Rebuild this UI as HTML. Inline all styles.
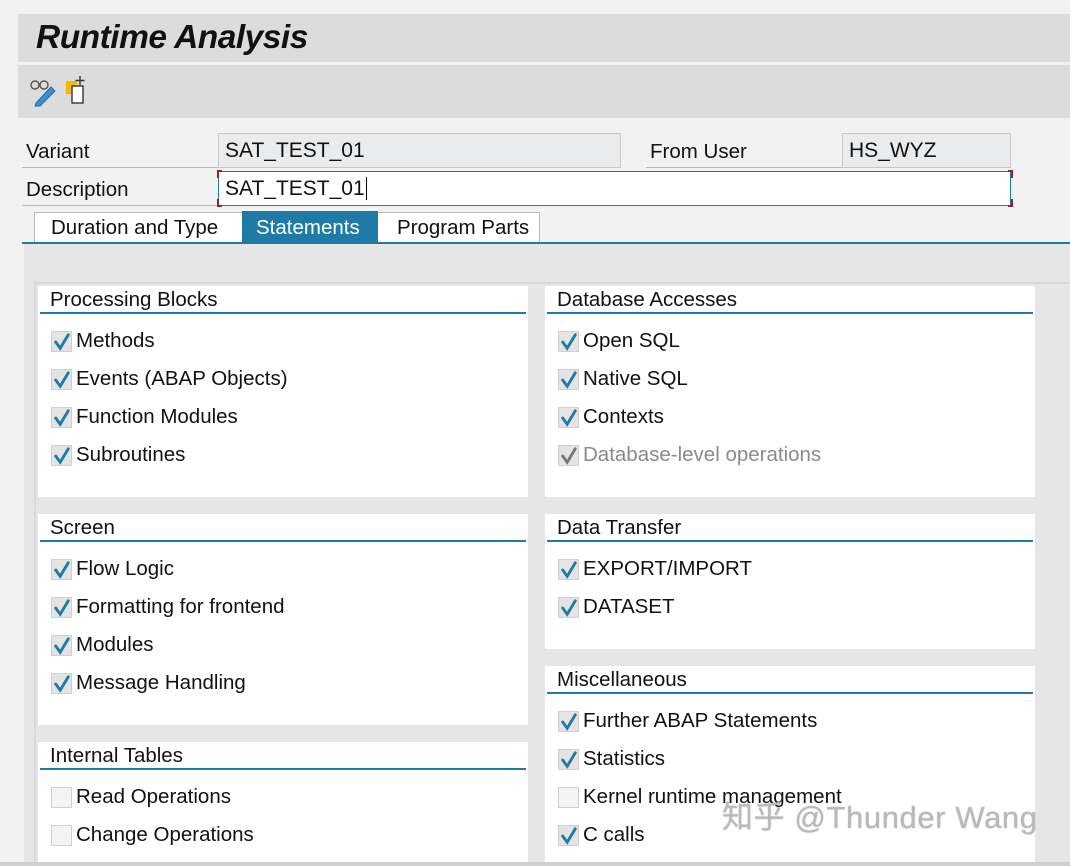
<!DOCTYPE html>
<html><head><meta charset="utf-8"><style>
*{margin:0;padding:0;box-sizing:border-box}
body{width:1070px;height:866px;background:#f2f2f2;font-family:"Liberation Sans","Noto Sans CJK SC",sans-serif;position:relative;overflow:hidden;color:#111}
.a{position:absolute}
.t{font-size:20.5px;white-space:nowrap;line-height:24px}
.panel{position:absolute;background:#fff}
.hd{position:absolute;left:12px;top:2px;font-size:20.5px;line-height:24px}
.ul{position:absolute;left:2px;right:2px;top:26px;height:2px;background:#1f7ba6}
.cb{position:absolute;width:21px;height:21px;background:#e4e4e4;border:1px solid #d0d0d0}
.cb svg{position:absolute;left:1px;top:0}
.it{position:absolute;font-size:20.5px;line-height:24px;white-space:nowrap}
.rc{position:absolute;width:5px;height:8px;border:0 solid #a01c2a}
</style></head><body>
<div class="a" style="left:18px;top:14px;width:1052px;height:48px;background:#dcdcdc"></div>
<div class="a" style="left:36px;top:18px;font-size:33.5px;font-weight:bold;font-style:italic;line-height:40px;letter-spacing:-0.5px">Runtime Analysis</div>
<div class="a" style="left:18px;top:65px;width:1052px;height:53px;background:#dcdcdc"></div>
<svg class="a" style="left:28px;top:75px" width="66" height="32" viewBox="0 0 66 32">
<circle cx="7" cy="10" r="4" fill="none" stroke="#555" stroke-width="1.4"/><circle cx="16" cy="10" r="4" fill="none" stroke="#555" stroke-width="1.4"/>
<path d="M8 28 L23 12 L27 16 L12 31 L7 31 Z" fill="#3a8fd0" stroke="#2a6aa0"/>
<rect x="38" y="6" width="11" height="13" fill="#f5b800"/><rect x="44" y="11" width="11" height="17" fill="#fff" stroke="#333" stroke-width="1.4"/><path d="M52 1v9M47.5 5.5h9" stroke="#333" stroke-width="1.4"/>
</svg>
<div class="a t" style="left:26px;top:140px">Variant</div>
<div class="a" style="left:22px;top:167px;width:196px;height:1px;background:#bbb"></div>
<div class="a" style="left:218px;top:133px;width:403px;height:35px;background:#e9ebed;border:1px solid #c8c8c8"></div>
<div class="a t" style="left:225px;top:139px;font-size:21px">SAT_TEST_01</div>
<div class="a t" style="left:650px;top:140px">From User</div>
<div class="a" style="left:646px;top:167px;width:196px;height:1px;background:#bbb"></div>
<div class="a" style="left:842px;top:133px;width:169px;height:35px;background:#e9ebed;border:1px solid #c8c8c8"></div>
<div class="a t" style="left:849px;top:139px;font-size:21px">HS_WYZ</div>
<div class="a t" style="left:26px;top:178px">Description</div>
<div class="a" style="left:22px;top:205px;width:196px;height:1px;background:#bbb"></div>
<div class="a" style="left:218px;top:171px;width:793px;height:35px;background:#fff;border:1px solid #1f7ba6"></div>
<div class="rc" style="left:217px;top:170px;border-left-width:2px;border-top-width:2px"></div>
<div class="rc" style="left:217px;top:199px;border-left-width:2px;border-bottom-width:2px"></div>
<div class="rc" style="left:1008px;top:170px;border-right-width:2px;border-top-width:2px"></div>
<div class="rc" style="left:1008px;top:199px;border-right-width:2px;border-bottom-width:2px"></div>
<div class="a t" style="left:225px;top:177px;font-size:21px">SAT_TEST_01<span style="border-left:1.5px solid #000;margin-left:1px"></span></div>
<div class="a" style="left:34px;top:212px;width:506px;height:31px;background:#fff;border:1px solid #bbb;border-bottom:none"></div>
<div class="a t" style="left:51px;top:216px">Duration and Type</div>
<div class="a" style="left:242px;top:211px;width:136px;height:32px;background:#1f7ba6"></div>
<div class="a t" style="left:256px;top:216px;color:#fff">Statements</div>
<div class="a t" style="left:397px;top:216px">Program Parts</div>
<div class="a" style="left:22px;top:242px;width:1048px;height:2px;background:#1f7ba6"></div>
<div class="a" style="left:24px;top:244px;width:1046px;height:622px;background:#e6e6e6"></div>
<div class="a" style="left:34px;top:282px;width:1036px;height:584px;background:#e6e6e6;border-top:2px solid #d6dae0;border-left:2px solid #d6dae0"></div>
<svg width="0" height="0" style="position:absolute"><defs><symbol id="ck" viewBox="0 0 20 20"><path d="M3 10 L8 17 L17 2" fill="none" stroke="#1f7ba6" stroke-width="3.2" stroke-linecap="round"/></symbol><symbol id="gk" viewBox="0 0 20 20"><path d="M3 10 L8 17 L17 2" fill="none" stroke="#777" stroke-width="3.2" stroke-linecap="round"/></symbol></defs></svg>
<div class="panel" style="left:38px;top:286px;width:490px;height:211px">
<div class="hd">Processing Blocks</div><div class="ul"></div>
<div class="cb" style="left:13px;top:45px"><svg width="18" height="20"><use href="#ck"/></svg></div><div class="it" style="left:38px;top:43px">Methods</div>
<div class="cb" style="left:13px;top:83px"><svg width="18" height="20"><use href="#ck"/></svg></div><div class="it" style="left:38px;top:81px">Events (ABAP Objects)</div>
<div class="cb" style="left:13px;top:121px"><svg width="18" height="20"><use href="#ck"/></svg></div><div class="it" style="left:38px;top:119px">Function Modules</div>
<div class="cb" style="left:13px;top:159px"><svg width="18" height="20"><use href="#ck"/></svg></div><div class="it" style="left:38px;top:157px">Subroutines</div>
</div>
<div class="panel" style="left:38px;top:514px;width:490px;height:211px">
<div class="hd">Screen</div><div class="ul"></div>
<div class="cb" style="left:13px;top:45px"><svg width="18" height="20"><use href="#ck"/></svg></div><div class="it" style="left:38px;top:43px">Flow Logic</div>
<div class="cb" style="left:13px;top:83px"><svg width="18" height="20"><use href="#ck"/></svg></div><div class="it" style="left:38px;top:81px">Formatting for frontend</div>
<div class="cb" style="left:13px;top:121px"><svg width="18" height="20"><use href="#ck"/></svg></div><div class="it" style="left:38px;top:119px">Modules</div>
<div class="cb" style="left:13px;top:159px"><svg width="18" height="20"><use href="#ck"/></svg></div><div class="it" style="left:38px;top:157px">Message Handling</div>
</div>
<div class="panel" style="left:38px;top:742px;width:490px;height:124px">
<div class="hd">Internal Tables</div><div class="ul"></div>
<div class="cb" style="left:13px;top:45px;background:#f4f4f4"></div><div class="it" style="left:38px;top:43px">Read Operations</div>
<div class="cb" style="left:13px;top:83px;background:#f4f4f4"></div><div class="it" style="left:38px;top:81px">Change Operations</div>
</div>
<div class="panel" style="left:545px;top:286px;width:490px;height:211px">
<div class="hd">Database Accesses</div><div class="ul"></div>
<div class="cb" style="left:13px;top:45px"><svg width="18" height="20"><use href="#ck"/></svg></div><div class="it" style="left:38px;top:43px">Open SQL</div>
<div class="cb" style="left:13px;top:83px"><svg width="18" height="20"><use href="#ck"/></svg></div><div class="it" style="left:38px;top:81px">Native SQL</div>
<div class="cb" style="left:13px;top:121px"><svg width="18" height="20"><use href="#ck"/></svg></div><div class="it" style="left:38px;top:119px">Contexts</div>
<div class="cb" style="left:13px;top:159px"><svg width="18" height="20"><use href="#gk"/></svg></div><div class="it" style="left:38px;top:157px;color:#8a8a8a">Database-level operations</div>
</div>
<div class="panel" style="left:545px;top:514px;width:490px;height:135px">
<div class="hd">Data Transfer</div><div class="ul"></div>
<div class="cb" style="left:13px;top:45px"><svg width="18" height="20"><use href="#ck"/></svg></div><div class="it" style="left:38px;top:43px">EXPORT/IMPORT</div>
<div class="cb" style="left:13px;top:83px"><svg width="18" height="20"><use href="#ck"/></svg></div><div class="it" style="left:38px;top:81px">DATASET</div>
</div>
<div class="panel" style="left:545px;top:666px;width:490px;height:200px">
<div class="hd">Miscellaneous</div><div class="ul"></div>
<div class="cb" style="left:13px;top:45px"><svg width="18" height="20"><use href="#ck"/></svg></div><div class="it" style="left:38px;top:43px">Further ABAP Statements</div>
<div class="cb" style="left:13px;top:83px"><svg width="18" height="20"><use href="#ck"/></svg></div><div class="it" style="left:38px;top:81px">Statistics</div>
<div class="cb" style="left:13px;top:121px;background:#f4f4f4"></div><div class="it" style="left:38px;top:119px">Kernel runtime management</div>
<div class="cb" style="left:13px;top:159px"><svg width="18" height="20"><use href="#ck"/></svg></div><div class="it" style="left:38px;top:157px">C calls</div>
</div>
<div class="a" style="left:722px;top:800px;font-size:31px;line-height:36px;color:rgba(190,190,190,0.85);white-space:nowrap;letter-spacing:0.6px;text-shadow:0 0 1px #999">知乎 @Thunder Wang</div>
<div class="a" style="left:0;top:862px;width:1070px;height:4px;background:#cfcfcf"></div>
</body></html>
